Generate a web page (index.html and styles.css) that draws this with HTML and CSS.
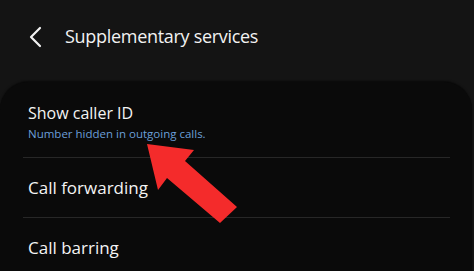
FILE: index.html
```html
<!DOCTYPE html>
<html>
<head>
<meta charset="utf-8">
<link rel="stylesheet" href="styles.css">
</head>
<body>
<div class="screen">
  <header class="topbar">
    <svg class="back" width="14" height="22" viewBox="0 0 14 22"><path d="M11 2 L2 11 L11 20" fill="none" stroke="#f2f2f2" stroke-width="2.2" stroke-linecap="round" stroke-linejoin="round"/></svg>
    <h1 class="title">Supplementary services</h1>
  </header>
  <main class="card">
    <div class="row row-first">
      <div class="label">Show caller ID</div>
      <div class="sub">Number hidden in outgoing calls.</div>
    </div>
    <div class="row">
      <div class="label">Call forwarding</div>
    </div>
    <div class="row">
      <div class="label">Call barring</div>
    </div>
  </main>
  <svg class="arrow" width="474" height="271" viewBox="0 0 474 271"><polygon points="147,144 194,150 185,161 237,207 220,223 167,178 158,190" fill="#f42b2b"/></svg>
</div>
</body>
</html>
```
FILE: styles.css
```css
html, body {
  margin: 0;
  padding: 0;
  background: #141414;
}
body {
  width: 474px;
  height: 271px;
  overflow: hidden;
  font-family: "Open Sans", "DejaVu Sans", sans-serif;
}
.screen {
  position: relative;
  width: 474px;
  height: 271px;
  overflow: hidden;
  display: flex;
  flex-direction: column;
}
.topbar {
  height: 82px;
  flex: none;
  display: flex;
  align-items: center;
  padding: 0 0 10px 29px;
  box-sizing: border-box;
}
.back {
  display: block;
  margin-top: 2px;
}
.title {
  margin: 0 0 0 22px;
  font-weight: 400;
  font-size: 18px;
  color: #f2f2f2;
  letter-spacing: -0.3px;
}
.card {
  flex: 1;
  margin: 0 2px 0 0;
  background: #0a0a0a;
  border-radius: 28px 28px 0 0;
  box-shadow: 0 -1px 2px rgba(0,0,0,0.6);
  padding: 0 22px 0 23px;
}
.row {
  border-bottom: 1px solid #272727;
  padding: 0 5px;
  height: 59px;
  display: flex;
  flex-direction: column;
  justify-content: center;
}
.row-first {
  height: 76px;
  padding-top: 5px;
  box-sizing: border-box;
}
.row:last-child {
  border-bottom: none;
}
.label {
  font-size: 17px;
  color: #f4f4f4;
  line-height: 22px;
}
.row-first .label {
  font-size: 16px;
}
.sub {
  font-size: 11.5px;
  color: #6b9fd9;
  line-height: 16px;
  margin-top: 2px;
}
.arrow {
  position: absolute;
  left: 0;
  top: 0;
  pointer-events: none;
}
```
